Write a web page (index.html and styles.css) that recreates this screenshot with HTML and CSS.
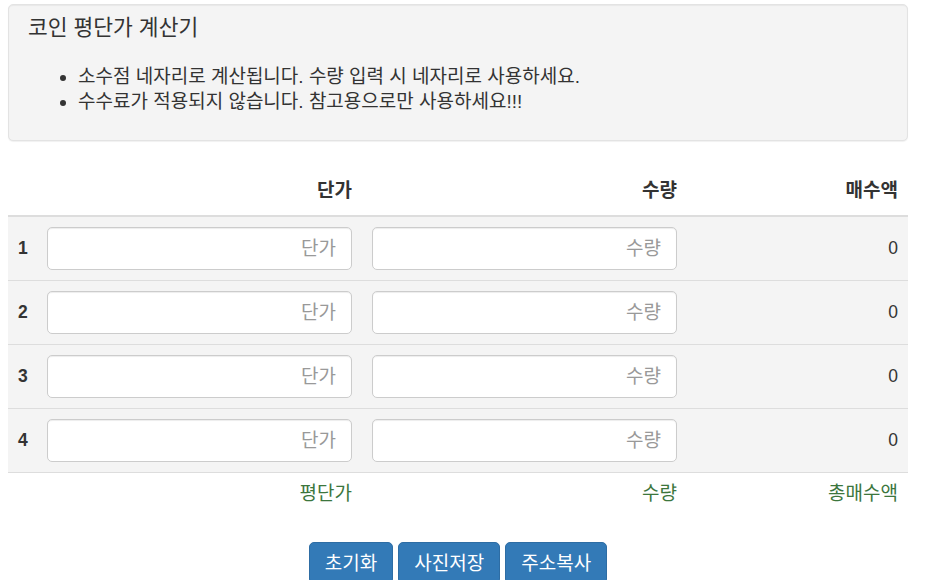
FILE: index.html
```html
<!DOCTYPE html>
<html lang="ko">
<head>
<meta charset="utf-8">
<title>코인 평단가 계산기</title>
<link rel="stylesheet" href="styles.css">
</head>
<body>
<div class="container">
  <div class="well">
    <h4 class="title">코인 평단가 계산기</h4>
    <ul class="notes">
      <li>소수점 네자리로 계산됩니다. 수량 입력 시 네자리로 사용하세요.</li>
      <li>수수료가 적용되지 않습니다. 참고용으로만 사용하세요!!!</li>
    </ul>
  </div>

  <table class="calc">
    <colgroup>
      <col class="c-no">
      <col class="c-price">
      <col class="c-qty">
      <col class="c-amt">
    </colgroup>
    <thead>
      <tr>
        <th></th>
        <th>단가</th>
        <th>수량</th>
        <th>매수액</th>
      </tr>
    </thead>
    <tbody>
      <tr>
        <th class="no">1</th>
        <td><input class="form-control" type="text" placeholder="단가"></td>
        <td><input class="form-control" type="text" placeholder="수량"></td>
        <td class="amt">0</td>
      </tr>
      <tr>
        <th class="no">2</th>
        <td><input class="form-control" type="text" placeholder="단가"></td>
        <td><input class="form-control" type="text" placeholder="수량"></td>
        <td class="amt">0</td>
      </tr>
      <tr>
        <th class="no">3</th>
        <td><input class="form-control" type="text" placeholder="단가"></td>
        <td><input class="form-control" type="text" placeholder="수량"></td>
        <td class="amt">0</td>
      </tr>
      <tr>
        <th class="no">4</th>
        <td><input class="form-control" type="text" placeholder="단가"></td>
        <td><input class="form-control" type="text" placeholder="수량"></td>
        <td class="amt">0</td>
      </tr>
    </tbody>
    <tfoot>
      <tr>
        <td></td>
        <td class="sum">평단가</td>
        <td class="sum">수량</td>
        <td class="sum">총매수액</td>
      </tr>
    </tfoot>
  </table>

  <div class="actions">
    <button class="btn" type="button">초기화</button>
    <button class="btn" type="button">사진저장</button>
    <button class="btn" type="button">주소복사</button>
  </div>
</div>
</body>
</html>
```

FILE: styles.css
```css
* { box-sizing: border-box; }

html, body {
  margin: 0;
  padding: 0;
  background: #fff;
}

body {
  padding: 4px 8px 0 8px;
  font-family: "Liberation Sans", "Noto Sans CJK KR", sans-serif;
  font-size: 19px;
  line-height: 25px;
  color: #333;
}

.container {
  width: 900px;
}

.well {
  background: #f4f4f4;
  border: 1px solid #e3e3e3;
  border-radius: 5px;
  box-shadow: inset 0 1px 1px rgba(0,0,0,.05), 0 1px 1px rgba(0,0,0,.06);
  padding: 11px 19px 26px 19px;
  height: 137px;
}

.title {
  margin: 0;
  font-size: 21.5px;
  font-weight: normal;
  line-height: 25px;
}

.notes {
  margin: 23px 0 0 0;
  padding-left: 50px;
}

.calc {
  width: 900px;
  margin-top: 25px;
  border-collapse: collapse;
  table-layout: fixed;
}

.c-no { width: 29px; }
.c-price { width: 325px; }
.c-qty { width: 325px; }
.c-amt { width: 221px; }

.calc thead th {
  text-align: right;
  font-weight: bold;
  padding: 12px 10px 12px 10px;
  border-bottom: 2px solid #ddd;
  vertical-align: bottom;
}

.calc tbody tr {
  background: #f4f4f4;
}

.calc tbody th,
.calc tbody td {
  padding: 10px;
  border-top: 1px solid #ddd;
  vertical-align: middle;
}

.calc tbody tr:first-child th,
.calc tbody tr:first-child td {
  border-top: 0;
}

.calc .no {
  text-align: left;
  font-weight: bold;
  font-size: 17.5px;
}

.calc .amt {
  text-align: right;
  font-size: 17.5px;
}

.calc tfoot td {
  border-top: 1px solid #ddd;
  padding: 8px 10px 10px 10px;
}

.calc .sum {
  text-align: right;
  color: #3c763d;
}

.form-control {
  display: block;
  width: 100%;
  height: 43px;
  padding: 7px 15px;
  font-family: "Liberation Sans", "Noto Sans CJK KR", sans-serif;
  font-size: 19px;
  line-height: 25px;
  color: #555;
  text-align: right;
  background: #fff;
  border: 1px solid #ccc;
  border-radius: 5px;
  box-shadow: inset 0 1px 1px rgba(0,0,0,.075);
}

.form-control::placeholder {
  color: #999;
}

.actions {
  display: flex;
  justify-content: center;
  gap: 5px;
  margin-top: 26px;
}

.btn {
  font-family: "Liberation Sans", "Noto Sans CJK KR", sans-serif;
  font-size: 19px;
  line-height: 25px;
  padding: 7.5px 15px;
  color: #fff;
  background: #337ab7;
  border: 1px solid #2e6da4;
  border-radius: 5px;
}
```
